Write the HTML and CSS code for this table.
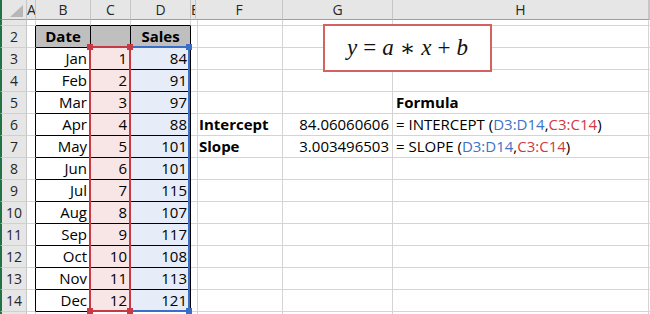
FILE: index.html
```html
<!DOCTYPE html>
<html lang="en">

<head>
    <meta charset="UTF-8">
    <meta name="viewport" content="width=device-width, initial-scale=1.0">
    <title>Linear regression - Intercept and Slope</title>
    <link rel="stylesheet" href="styles.css">
</head>

<body>

    <div class="sheet">

        <!-- column letters -->
        <div class="row head">
            <div class="corner"><span class="tri"></span></div>
            <div>A</div><div>B</div><div>C</div><div>D</div><div class="cut">E</div><div>F</div><div>G</div><div>H</div><div></div>
        </div>

        <!-- row 1 is hidden -->
        <div class="row hide">
            <div class="rh"></div><div></div><div class="tb"></div><div class="tb"></div><div class="tb"></div><div></div><div></div><div></div><div></div><div></div>
        </div>

        <div class="row">
            <div class="rh">2</div><div class="tl"></div><div class="t th">Date</div><div class="t th"></div><div class="t th">Sales</div><div></div><div></div><div></div><div></div><div></div>
        </div>
        <div class="row">
            <div class="rh">3</div><div class="tl"></div><div class="t r">Jan</div><div class="t r pink">1</div><div class="t r blue">84</div><div></div><div></div><div></div><div></div><div></div>
        </div>
        <div class="row">
            <div class="rh">4</div><div class="tl"></div><div class="t r">Feb</div><div class="t r pink">2</div><div class="t r blue">91</div><div></div><div></div><div></div><div></div><div></div>
        </div>
        <div class="row">
            <div class="rh">5</div><div class="tl"></div><div class="t r">Mar</div><div class="t r pink">3</div><div class="t r blue">97</div><div></div><div></div><div></div><div class="b">Formula</div><div></div>
        </div>
        <div class="row">
            <div class="rh">6</div><div class="tl"></div><div class="t r">Apr</div><div class="t r pink">4</div><div class="t r blue">88</div><div></div>
            <div class="b">Intercept</div>
            <div class="r">84.06060606</div>
            <div>= INTERCEPT (<span class="ref-d">D3:D14</span>,<span class="ref-c">C3:C14</span>)</div>
            <div></div>
        </div>
        <div class="row">
            <div class="rh">7</div><div class="tl"></div><div class="t r">May</div><div class="t r pink">5</div><div class="t r blue">101</div><div></div>
            <div class="b">Slope</div>
            <div class="r">3.003496503</div>
            <div>= SLOPE (<span class="ref-d">D3:D14</span>,<span class="ref-c">C3:C14</span>)</div>
            <div></div>
        </div>
        <div class="row">
            <div class="rh">8</div><div class="tl"></div><div class="t r">Jun</div><div class="t r pink">6</div><div class="t r blue">101</div><div></div><div></div><div></div><div></div><div></div>
        </div>
        <div class="row">
            <div class="rh">9</div><div class="tl"></div><div class="t r">Jul</div><div class="t r pink">7</div><div class="t r blue">115</div><div></div><div></div><div></div><div></div><div></div>
        </div>
        <div class="row">
            <div class="rh">10</div><div class="tl"></div><div class="t r">Aug</div><div class="t r pink">8</div><div class="t r blue">107</div><div></div><div></div><div></div><div></div><div></div>
        </div>
        <div class="row">
            <div class="rh">11</div><div class="tl"></div><div class="t r">Sep</div><div class="t r pink">9</div><div class="t r blue">117</div><div></div><div></div><div></div><div></div><div></div>
        </div>
        <div class="row">
            <div class="rh">12</div><div class="tl"></div><div class="t r">Oct</div><div class="t r pink">10</div><div class="t r blue">108</div><div></div><div></div><div></div><div></div><div></div>
        </div>
        <div class="row">
            <div class="rh">13</div><div class="tl"></div><div class="t r">Nov</div><div class="t r pink">11</div><div class="t r blue">113</div><div></div><div></div><div></div><div></div><div></div>
        </div>
        <div class="row">
            <div class="rh">14</div><div class="tl"></div><div class="t r">Dec</div><div class="t r pink">12</div><div class="t r blue">121</div><div></div><div></div><div></div><div></div><div></div>
        </div>
        <div class="row">
            <div class="rh"></div><div></div><div></div><div></div><div></div><div></div><div></div><div></div><div></div><div></div>
        </div>

        <!-- highlighted formula ranges -->
        <div class="range range-d"><i class="hd tr"></i><i class="hd br"></i></div>
        <div class="range range-c"><i class="hd tl"></i><i class="hd tr"></i><i class="hd bl"></i><i class="hd br"></i></div>

        <!-- equation text box -->
        <div class="eq">
            <span class="v">y</span><span class="op">=</span><span class="v">a</span><span class="op">∗</span><span class="v">x</span><span class="op">+</span><span class="v">b</span>
        </div>

    </div>

</body>

</html>
```

FILE: styles.css
```css
* {
    box-sizing: border-box;
}

body {
    margin: 0;
    background: #fff;
    color: #000;
    font-family: "Open Sans", "Noto Sans", sans-serif;
    font-size: 15px;
    overflow: hidden;
}

.sheet {
    position: relative;
    height: 314px;
    overflow: hidden;
}

.row {
    display: grid;
    grid-template-columns: 27px 9px 55px 40px 60px 5px 87px 110px 256px 1fr;
    height: 22px;
}

.row > div {
    border-right: 1px solid #d4d4d4;
    border-bottom: 1px solid #d4d4d4;
    padding: 0 3px;
    line-height: 21px;
    white-space: nowrap;
    overflow: hidden;
}

/* column header */
.head {
    height: 20px;
}
.head > div {
    background: #e6e6e6;
    border-right-color: #c6c6c6 !important;
    border-bottom-color: #9e9e9e !important;
    text-align: center;
    line-height: 19px !important;
    font-size: 14px;
    color: #262626;
    padding: 0 !important;
}
.head > div:first-child {
    border-left: 2px solid #217346;
}
.head .cut {
    text-align: left;
}
.head .corner {
    display: flex;
    justify-content: flex-end;
    align-items: flex-end;
    padding: 0 3px 2px 0 !important;
}
.corner .tri {
    width: 0;
    height: 0;
    border-left: 13px solid transparent;
    border-bottom: 12px solid #b7b7b7;
}

.hide {
    height: 6px;
}
.hide > div:first-child {
    border-left: 2px solid #217346;
    border-right-color: #c6c6c6;
}

/* row numbers */
.rh {
    background: #e6e6e6;
    border-left: 2px solid #217346;
    border-right-color: #c6c6c6 !important;
    border-bottom-color: #d0d0d0 !important;
    text-align: center;
    font-size: 14px;
    color: #262626;
    padding: 0 !important;
}

/* the data table B2:D14 */
.t {
    border-right-color: #000 !important;
    border-bottom-color: #000 !important;
}
.tl {
    border-right-color: #000 !important;
}
.tb {
    border-bottom-color: #000 !important;
}
.th {
    background: #bfbfbf;
    font-weight: bold;
    text-align: center;
}
.pink {
    background: #f8e6e7;
}
.blue {
    background: #e7edf8;
}

.r {
    text-align: right;
}
.b {
    font-weight: bold;
}

.ref-d {
    color: #3d72c6;
}
.ref-c {
    color: #cf3a47;
}

/* coloured outlines of the referenced ranges */
.range {
    position: absolute;
    top: 46px;
    height: 266px;
    border: 2px solid;
    pointer-events: none;
}
.range-c {
    left: 89px;
    width: 42px;
    border-color: #c63a45;
}
.range-d {
    left: 129px;
    width: 61px;
    border-color: #3b6fc7;
}
.range .hd {
    position: absolute;
    width: 6px;
    height: 6px;
}
.range-c .hd {
    background: #c63a45;
}
.range-d .hd {
    background: #3b6fc7;
}
.hd.tl { left: -4px; top: -4px; }
.hd.tr { right: -4px; top: -4px; }
.hd.bl { left: -4px; bottom: -4px; }
.hd.br { right: -4px; bottom: -4px; }

/* text box with the line equation */
.eq {
    position: absolute;
    left: 323px;
    top: 24px;
    width: 169px;
    height: 48px;
    border: 2px solid #d46262;
    background: #fff;
    display: flex;
    justify-content: center;
    align-items: center;
    font-family: "Liberation Serif", "DejaVu Serif", serif;
    font-size: 23px;
    color: #111;
}
.eq .v {
    font-style: italic;
}
.eq .op {
    margin: 0 6px;
}
```
